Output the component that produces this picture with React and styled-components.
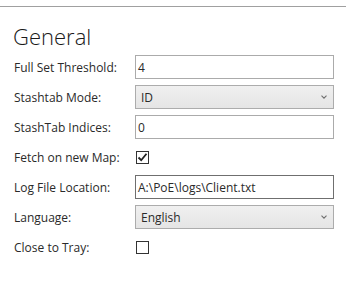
import React from "react";
import styled, { createGlobalStyle } from "styled-components";

const Global = createGlobalStyle`
  html, body { margin: 0; padding: 0; background: #ffffff; }
  body { width: 346px; height: 295px; overflow: hidden; font-family: "Open Sans", "Segoe UI", sans-serif; }
`;

const Panel = styled.section`
  margin-top: 6px;
  border-top: 1px solid #a0a0a0;
  padding: 15px 12px 0 13px;
`;

const Heading = styled.h1`
  margin: 0 0 5px 0;
  font-family: "Open Sans", "Segoe UI", sans-serif;
  font-weight: 300;
  font-size: 22px;
  line-height: 28px;
  color: #1a1a1a;
`;

const Form = styled.div`
  display: grid;
  grid-template-columns: 122px 199px;
  grid-auto-rows: 24px;
  row-gap: 6px;
`;

const Label = styled.label`
  display: flex;
  align-items: center;
  font-size: 12px;
  color: #2a2a2a;
  white-space: nowrap;
  padding-left: 1px;
`;

const TextBox = styled.div`
  box-sizing: border-box;
  height: 24px;
  border: 1px solid ${(p) => (p.$focused ? "#6f6f6f" : "#ababab")};
  background: #fff;
  display: flex;
  align-items: center;
  padding-left: 2px;
  font-size: 12px;
  color: #2a2a2a;
`;

const Combo = styled.div`
  box-sizing: border-box;
  height: 24px;
  border: 1px solid #acacac;
  background: linear-gradient(#f0f0f0, #e5e5e5);
  display: flex;
  align-items: center;
  justify-content: space-between;
  padding: 0 6px 0 5px;
  font-size: 12px;
  color: #2a2a2a;
`;

const CheckCell = styled.div`
  display: flex;
  align-items: center;
  padding-left: 1px;
`;

const Box = styled.div`
  box-sizing: border-box;
  width: 13px;
  height: 13px;
  border: 1px solid #333;
  background: #fff;
  display: flex;
  align-items: center;
  justify-content: center;
`;

const Chevron = () => (
  <svg width="6" height="4" viewBox="0 0 6 4">
    <path d="M0.5 0.6 L3 3.1 L5.5 0.6" fill="none" stroke="#707070" strokeWidth="1.1" />
  </svg>
);

const Check = ({ checked }) => (
  <Box>
    {checked && (
      <svg width="11" height="11" viewBox="0 0 11 11">
        <path d="M1.5 5.5 L4.2 8.2 L9.5 1.8" fill="none" stroke="#222" strokeWidth="1.8" />
      </svg>
    )}
  </Box>
);

export default function App() {
  return (
    <>
      <Global />
      <Panel>
        <Heading>General</Heading>
        <Form>
          <Label>Full Set Threshold:</Label>
          <TextBox>4</TextBox>
          <Label>Stashtab Mode:</Label>
          <Combo>
            <span>ID</span>
            <Chevron />
          </Combo>
          <Label>StashTab Indices:</Label>
          <TextBox>0</TextBox>
          <Label>Fetch on new Map:</Label>
          <CheckCell>
            <Check checked />
          </CheckCell>
          <Label>Log File Location:</Label>
          <TextBox $focused>A:\PoE\logs\Client.txt</TextBox>
          <Label>Language:</Label>
          <Combo>
            <span>English</span>
            <Chevron />
          </Combo>
          <Label>Close to Tray:</Label>
          <CheckCell>
            <Check />
          </CheckCell>
        </Form>
      </Panel>
    </>
  );
}
